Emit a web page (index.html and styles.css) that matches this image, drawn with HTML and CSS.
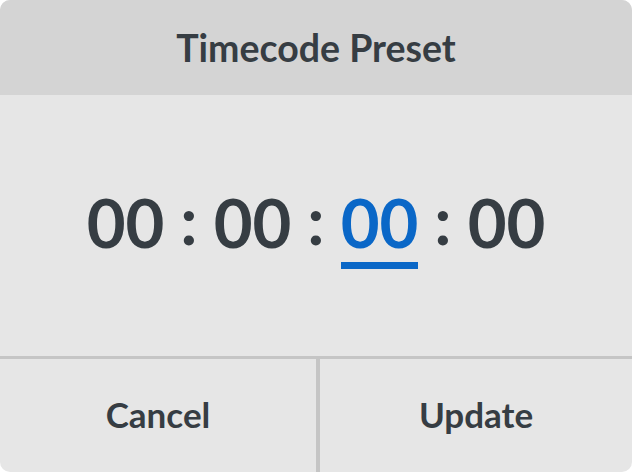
FILE: index.html
```html
<!DOCTYPE html>
<html lang="en">
  <head>
    <meta charset="UTF-8" />
    <title>Timecode Preset</title>
    <link rel="stylesheet" href="styles.css">
  </head>
  <body>
    <div class="dialog">
      <header class="dialog-header">Timecode Preset</header>

      <div class="dialog-body">
        <div class="timecode">
          <span class="field">00</span>
          <span class="sep">:</span>
          <span class="field">00</span>
          <span class="sep">:</span>
          <span class="field active">00</span>
          <span class="sep">:</span>
          <span class="field">00</span>
        </div>
      </div>

      <footer class="dialog-actions">
        <div class="btn">Cancel</div>
        <div class="btn">Update</div>
      </footer>
    </div>
  </body>
</html>
```

FILE: styles.css
```css
body {
  margin: 0;
  background: #fff;
  font-family: Lato, "Open Sans", sans-serif;
  font-weight: bold;
  color: #363d43;
}
.dialog {
  height: 472px;
  border-radius: 10px;
  overflow: hidden;
  display: flex;
  flex-direction: column;
  background: #e6e6e6;
}
.dialog-header {
  height: 95px;
  flex-shrink: 0;
  display: flex;
  align-items: center;
  justify-content: center;
  background: #d4d4d4;
  font-size: 37.5px;
}
.dialog-body {
  flex: 1;
  display: flex;
  align-items: center;
  justify-content: center;
  padding-top: 1px;
}
.timecode {
  display: flex;
  align-items: center;
  gap: 16px;
  font-size: 67px;
  line-height: 1;
}
.field {
  padding: 6px 0;
  border-bottom: 7px solid transparent;
}
.field.active {
  color: #0a67c7;
  border-bottom-color: #0a67c7;
}
.sep {
  padding-bottom: 13px;
}
.dialog-actions {
  height: 116px;
  flex-shrink: 0;
  box-sizing: border-box;
  border-top: 3px solid #c5c5c5;
  display: grid;
  grid-template-columns: 1fr 1fr;
}
.btn {
  display: flex;
  align-items: center;
  justify-content: center;
  padding-bottom: 3px;
  font-size: 35px;
}
.btn + .btn {
  border-left: 4px solid #c5c5c5;
}
```
